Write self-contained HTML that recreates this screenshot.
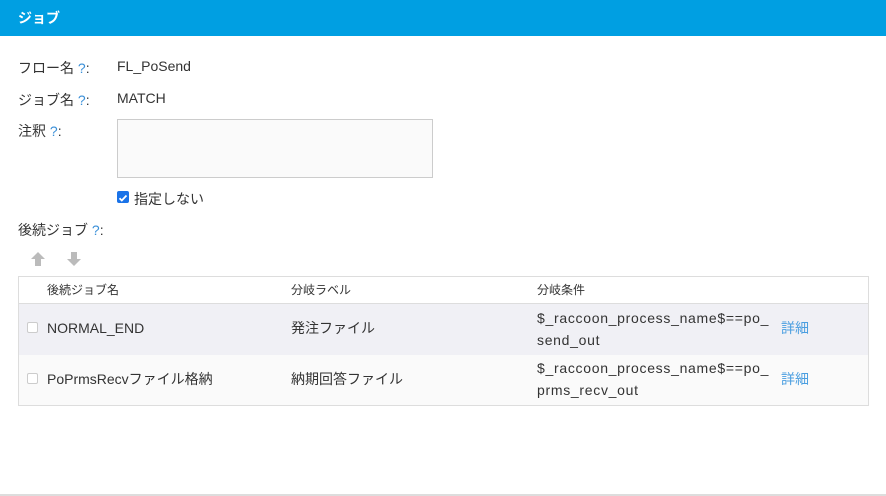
<!DOCTYPE html>
<html><head><meta charset="utf-8"><style>
*{margin:0;padding:0;box-sizing:border-box}
body{width:886px;height:496px;background:#fff;font-family:"Liberation Sans","Noto Sans CJK JP",sans-serif;color:#333;position:relative;overflow:hidden;font-size:14px}
.hdr{position:absolute;left:0;top:0;width:886px;height:36px;background:#009fe2;color:#fff;font-weight:bold;font-size:14px;padding:8px 0 0 18px}
.a{position:absolute;white-space:nowrap}
.q{color:#3a8fd8}
.ta{position:absolute;left:117px;top:119px;width:316px;height:59px;background:#fafafa;border:1px solid #ccc}
.cb{position:absolute;left:117px;top:191px;width:12px;height:12px;background:#1a73e8;border-radius:2px}
.tbl{position:absolute;left:18px;top:276px;width:851px;height:130px;border:1px solid #ddd}
.th{position:absolute;left:0;top:0;width:849px;height:27px;border-bottom:1px solid #ddd;font-size:12px}
.r1{position:absolute;left:0;top:27px;width:849px;height:51px;background:#f0f0f5}
.r2{position:absolute;left:0;top:78px;width:849px;height:50px;background:#fafafa}
.sq{position:absolute;left:8px;width:11px;height:11px;border:1px solid #ccc;border-radius:2px;background:#fff}
.c{position:absolute;line-height:22px;white-space:nowrap}
.cond{letter-spacing:0.7px}
.lk{color:#4a9ee0}
</style></head><body>
<div class="hdr">ジョブ</div>
<div class="a" style="left:18px;top:58px">フロー名 <span class="q">?</span>:</div>
<div class="a" style="left:117px;top:58px">FL_PoSend</div>
<div class="a" style="left:18px;top:90px">ジョブ名 <span class="q">?</span>:</div>
<div class="a" style="left:117px;top:90px">MATCH</div>
<div class="a" style="left:18px;top:121px">注釈 <span class="q">?</span>:</div>
<div class="ta"></div>
<div class="cb"><svg width="12" height="12" viewBox="0 0 12 12"><path d="M2.5 6.2l2.3 2.3 4.7-5" stroke="#fff" stroke-width="1.8" fill="none"/></svg></div>
<div class="a" style="left:134px;top:189px">指定しない</div>
<div class="a" style="left:18px;top:220px">後続ジョブ <span class="q">?</span>:</div>
<svg class="a" style="left:30px;top:251px" width="16" height="16" viewBox="0 0 16 16"><path d="M8 1L1 8h4v7h6V8h4z" fill="#bbb"/></svg>
<svg class="a" style="left:66px;top:251px" width="16" height="16" viewBox="0 0 16 16"><path d="M8 15L1 8h4V1h6v7h4z" fill="#bbb"/></svg>
<div class="tbl">
<div class="th"><span class="c" style="left:28px;top:2px">後続ジョブ名</span><span class="c" style="left:272px;top:2px">分岐ラベル</span><span class="c" style="left:518px;top:2px">分岐条件</span></div>
<div class="r1"><div class="sq" style="top:18px"></div><span class="c" style="left:28px;top:13px">NORMAL_END</span><span class="c" style="left:272px;top:13px">発注ファイル</span><span class="c cond" style="left:518px;top:3px">$_raccoon_process_name$==po_<br>send_out</span><span class="c lk" style="left:762px;top:13px">詳細</span></div>
<div class="r2"><div class="sq" style="top:18px"></div><span class="c" style="left:28px;top:13px">PoPrmsRecvファイル格納</span><span class="c" style="left:272px;top:13px">納期回答ファイル</span><span class="c cond" style="left:518px;top:2px">$_raccoon_process_name$==po_<br>prms_recv_out</span><span class="c lk" style="left:762px;top:13px">詳細</span></div>
</div>
<div class="a" style="left:0;top:494px;width:886px;height:2px;background:#ddd"></div>
</body></html>
